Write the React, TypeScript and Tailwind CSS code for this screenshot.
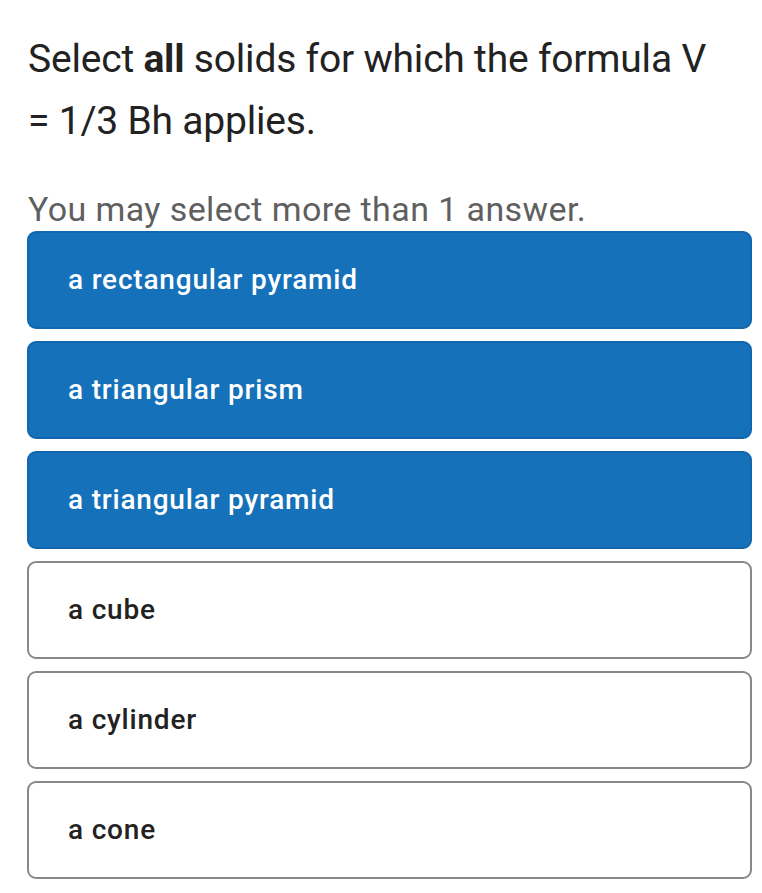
import React from "react";

const options = [
  { label: "a rectangular pyramid", selected: true },
  { label: "a triangular prism", selected: true },
  { label: "a triangular pyramid", selected: true },
  { label: "a cube", selected: false },
  { label: "a cylinder", selected: false },
  { label: "a cone", selected: false },
];

export default function App() {
  return (
    <div
      className="w-[762px] h-[893px] bg-white overflow-hidden"
      style={{ fontFamily: "Roboto, 'Noto Sans', sans-serif" }}
    >
      <div className="pl-[28px] pt-[28px]">
        <h1 className="w-[700px] text-[39px] leading-[62px] tracking-[-0.2px] text-[#222222] font-normal">
          Select <span className="font-bold">all</span> solids for which the formula V = 1/3 Bh applies.
        </h1>
        <p className="mt-[37px] text-[34px] leading-[40px] tracking-[0.4px] text-[#5f5f5f]">
          You may select more than 1 answer.
        </p>
      </div>
      <div className="mt-[2px] ml-[27px] w-[725px] flex flex-col gap-[12px]">
        {options.map((o) => (
          <div
            key={o.label}
            className={
              o.selected
                ? "h-[98px] rounded-[9px] border-2 border-[#1166ad] bg-[#1571b9] flex items-center pl-[39px]"
                : "h-[98px] rounded-[9px] border-2 border-[#888888] bg-white flex items-center pl-[39px]"
            }
          >
            <span
              className={
                o.selected
                  ? "text-[28px] tracking-[0.8px] font-medium text-white"
                  : "text-[28px] tracking-[0.8px] font-medium text-[#222222]"
              }
            >
              {o.label}
            </span>
          </div>
        ))}
      </div>
    </div>
  );
}
